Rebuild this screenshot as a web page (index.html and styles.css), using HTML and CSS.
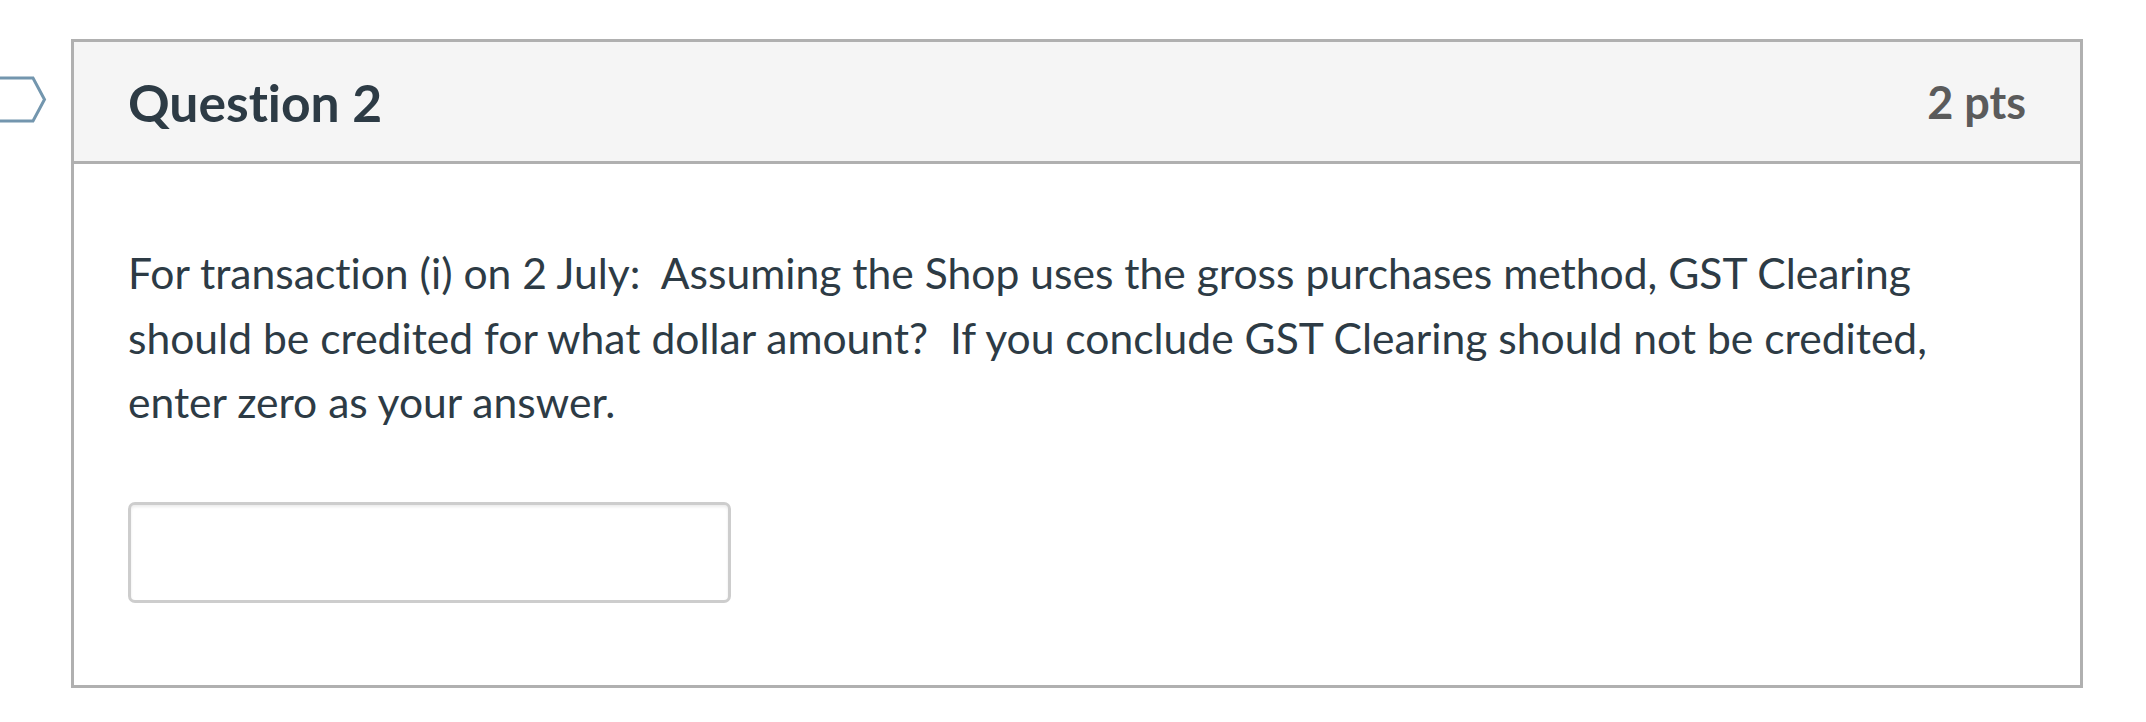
FILE: index.html
```html
<!DOCTYPE html>
<html>
<head>
<meta charset="utf-8">
<link rel="stylesheet" href="styles.css">
</head>
<body>
<div class="page">
  <div class="flag-col">
    <svg class="flag" width="72" height="48" viewBox="0 0 72 48">
      <path d="M-10 2 H33 L44.5 23.5 L33 45 H-10 Z" fill="#fff" stroke="#7396ae" stroke-width="3" stroke-linejoin="miter"/>
    </svg>
  </div>
  <div class="card">
    <div class="card-header">
      <h2 class="q-title">Question 2</h2>
      <span class="q-points">2 pts</span>
    </div>
    <div class="card-body">
      <p class="q-text">For transaction (i) on 2 July:&nbsp; Assuming the Shop uses the gross purchases method, GST Clearing should be credited for what dollar amount?&nbsp; If you conclude GST Clearing should not be credited, enter zero as your answer.</p>
      <input class="answer" type="text">
    </div>
  </div>
</div>
</body>
</html>
```
FILE: styles.css
```css
html, body {
  margin: 0;
  padding: 0;
  background: #fff;
}
body {
  font-family: Lato, "Open Sans", sans-serif;
  color: #2d3b45;
  font-variant-ligatures: none;
  font-feature-settings: "liga" 0;
}
.page {
  display: flex;
  align-items: flex-start;
  padding-top: 39px;
  width: 2083px;
}
.flag-col {
  width: 71px;
  flex: none;
  padding-top: 37px;
}
.flag {
  display: block;
}
.card {
  flex: 1;
  border: 3px solid #b0b0b0;
}
.card-header {
  display: flex;
  justify-content: space-between;
  align-items: center;
  height: 119px;
  padding: 0 54px 0 54px;
  background: #f5f5f5;
  border-bottom: 3px solid #b0b0b0;
}
.q-title {
  margin: 0;
  font-size: 51.6px;
  font-weight: 700;
  color: #2d3b45;
}
.q-points {
  font-size: 45px;
  font-weight: 700;
  color: #5b5b5b;
}
.card-body {
  padding: 77px 54px 83px;
}
.q-text {
  margin: 0 0 67px;
  font-size: 42.6px;
  line-height: 64.5px;
}
.answer {
  display: block;
  box-sizing: border-box;
  width: 603px;
  height: 101px;
  margin: 0 0 -1px;
  border: 3px solid #cdcdcd;
  border-radius: 7px;
  box-shadow: inset 0 2px 3px rgba(0,0,0,0.08);
  background: #fff;
}
```
